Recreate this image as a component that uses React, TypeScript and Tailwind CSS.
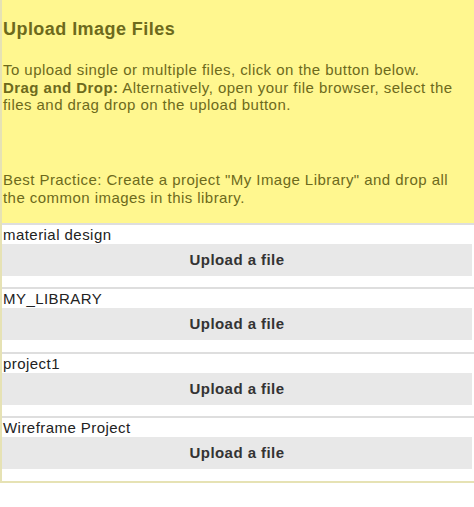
import React from "react";

const projects = ["material design", "MY_LIBRARY", "project1", "Wireframe Project"];

export default function App() {
  return (
    <div className="w-[474px] bg-white font-['Liberation_Sans',Arial,sans-serif] tracking-[0.45px]">
      <div className="border-l-2 border-b-2 border-[#e6e2b4]">
        <div className="bg-[#fff78f] pl-px pt-[19px] pb-[17px] text-[#6d6a1c]">
          <h1 className="text-[18px] font-bold leading-[21px]">Upload Image Files</h1>
          <p className="mt-[21px] text-[15px] leading-[17.5px]">
            To upload single or multiple files, click on the button below.
            <br />
            <b>Drag and Drop:</b> Alternatively, open your file browser, select the files and drag drop on the upload button.
          </p>
          <p className="mt-[57.5px] text-[15px] leading-[17.5px]">
            Best Practice: Create a project "My Image Library" and drop all the common images in this library.
          </p>
        </div>
        {projects.map((p) => (
          <div key={p} className="border-t-2 border-[#dedede] pr-[2px] pb-[11.4px]">
            <div className="pl-px text-[15px] leading-[19px] text-[#222]">{p}</div>
            <div className="h-[32px] bg-[#e8e8e8] text-center text-[15px] font-bold leading-[32px] text-[#333]">
              Upload a file
            </div>
          </div>
        ))}
      </div>
    </div>
  );
}
